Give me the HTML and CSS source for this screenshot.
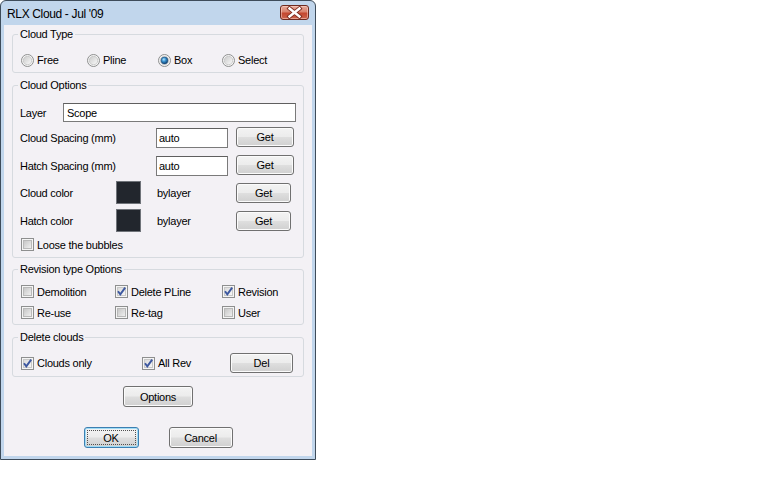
FILE: index.html
```html
<!DOCTYPE html>
<html>
<head>
<meta charset="utf-8">
<title>RLX Cloud - Jul '09</title>
<link rel="stylesheet" href="styles.css">
</head>
<body>
<svg class="defs" width="0" height="0" aria-hidden="true">
  <defs>
    <linearGradient id="g-cb-off" x1="0" y1="0" x2="1" y2="1">
      <stop offset="0" stop-color="#c4c4c4"/>
      <stop offset="1" stop-color="#f2f2f2"/>
    </linearGradient>
    <linearGradient id="g-cb-on" x1="0" y1="0" x2="1" y2="1">
      <stop offset="0" stop-color="#d9d9d9"/>
      <stop offset="1" stop-color="#f8f8f8"/>
    </linearGradient>
    <linearGradient id="g-rd" x1="0" y1="0" x2="1" y2="1">
      <stop offset="0" stop-color="#c9c9c9"/>
      <stop offset="1" stop-color="#fbfbfb"/>
    </linearGradient>
    <radialGradient id="g-dot" cx="0.4" cy="0.35" r="0.65">
      <stop offset="0" stop-color="#b5e6ff"/>
      <stop offset="0.45" stop-color="#3a92cf"/>
      <stop offset="1" stop-color="#0f3e6e"/>
    </radialGradient>
    <symbol id="cb-off" viewBox="0 0 13 13">
      <rect x="0.5" y="0.5" width="12" height="12" fill="#f5f5f5" stroke="#8e8f8f"/>
      <rect x="2.5" y="2.5" width="8" height="8" fill="url(#g-cb-off)" stroke="#b9b9b9"/>
    </symbol>
    <symbol id="cb-on" viewBox="0 0 13 13">
      <rect x="0.5" y="0.5" width="12" height="12" fill="#f5f5f5" stroke="#8e8f8f"/>
      <rect x="2.5" y="2.5" width="8" height="8" fill="url(#g-cb-on)" stroke="#c8c8c8"/>
      <path d="M3 6.2 L5.3 9.4 L10.2 2.6" fill="none" stroke="#3d58a0" stroke-width="1.9"/>
    </symbol>
    <symbol id="rd-off" viewBox="0 0 13 13">
      <circle cx="6.5" cy="6.5" r="6" fill="#f4f4f4" stroke="#8e8f8f"/>
      <circle cx="6.5" cy="6.5" r="4.2" fill="url(#g-rd)" stroke="#c4c4c4" stroke-width="0.8"/>
    </symbol>
    <symbol id="rd-on" viewBox="0 0 13 13">
      <circle cx="6.5" cy="6.5" r="6" fill="#f4f4f4" stroke="#8e8f8f"/>
      <circle cx="6.5" cy="6.5" r="4.2" fill="url(#g-rd)" stroke="#c4c4c4" stroke-width="0.8"/>
      <circle cx="6.5" cy="6.5" r="3.4" fill="url(#g-dot)" stroke="#1b4d7c" stroke-width="0.6"/>
    </symbol>
  </defs>
</svg>

<div class="window">
  <div class="titlebar">
    <span class="title">RLX Cloud - Jul '09</span>
    <span class="close">
      <svg width="27" height="13" viewBox="0 0 27 13">
        <path d="M8.5 2.5 L18.5 10.5 M18.5 2.5 L8.5 10.5" stroke="#7d2d20" stroke-width="4.2" stroke-linecap="square"/>
        <path d="M8.5 2.5 L18.5 10.5 M18.5 2.5 L8.5 10.5" stroke="#ffffff" stroke-width="2.4" stroke-linecap="square"/>
      </svg>
    </span>
  </div>

  <div class="content">
    <fieldset class="group g-type">
      <legend>Cloud Type</legend>
      <div class="radios">
        <span class="opt"><svg class="ico"><use href="#rd-off"/></svg>Free</span>
        <span class="opt"><svg class="ico"><use href="#rd-off"/></svg>Pline</span>
        <span class="opt"><svg class="ico"><use href="#rd-on"/></svg>Box</span>
        <span class="opt"><svg class="ico"><use href="#rd-off"/></svg>Select</span>
      </div>
    </fieldset>

    <fieldset class="group g-opts">
      <legend>Cloud Options</legend>
      <div class="row r-layer">
        <span class="lbl w-layer">Layer</span>
        <span class="field f-layer">Scope</span>
      </div>
      <div class="row r-sp r-sp1">
        <span class="lbl w-sp">Cloud Spacing (mm)</span>
        <span class="field f-sp">auto</span>
        <button class="btn b-get">Get</button>
      </div>
      <div class="row r-sp r-sp2">
        <span class="lbl w-sp">Hatch Spacing (mm)</span>
        <span class="field f-sp">auto</span>
        <button class="btn b-get">Get</button>
      </div>
      <div class="row r-col r-c1">
        <span class="lbl w-col">Cloud color</span>
        <span class="swatch"></span>
        <span class="bylayer">bylayer</span>
        <button class="btn b-get2">Get</button>
      </div>
      <div class="row r-col r-c2">
        <span class="lbl w-col">Hatch color</span>
        <span class="swatch"></span>
        <span class="bylayer">bylayer</span>
        <button class="btn b-get2">Get</button>
      </div>
      <div class="row r-loose">
        <span class="opt"><svg class="ico"><use href="#cb-off"/></svg>Loose the bubbles</span>
      </div>
    </fieldset>

    <fieldset class="group g-rev">
      <legend>Revision type Options</legend>
      <div class="grid3">
        <span class="opt"><svg class="ico"><use href="#cb-off"/></svg>Demolition</span>
        <span class="opt"><svg class="ico"><use href="#cb-on"/></svg>Delete PLine</span>
        <span class="opt"><svg class="ico"><use href="#cb-on"/></svg>Revision</span>
        <span class="opt"><svg class="ico"><use href="#cb-off"/></svg>Re-use</span>
        <span class="opt"><svg class="ico"><use href="#cb-off"/></svg>Re-tag</span>
        <span class="opt"><svg class="ico"><use href="#cb-off"/></svg>User</span>
      </div>
    </fieldset>

    <fieldset class="group g-del">
      <legend>Delete clouds</legend>
      <div class="row r-del">
        <span class="opt o-clouds"><svg class="ico"><use href="#cb-on"/></svg>Clouds only</span>
        <span class="opt o-allrev"><svg class="ico"><use href="#cb-on"/></svg>All Rev</span>
        <button class="btn b-del">Del</button>
      </div>
    </fieldset>

    <div class="center-row r-options">
      <button class="btn b-options">Options</button>
    </div>

    <div class="center-row r-actions">
      <button class="btn b-ok">OK</button>
      <button class="btn b-cancel">Cancel</button>
    </div>
  </div>
</div>
</body>
</html>
```

FILE: styles.css
```css
* {
  box-sizing: border-box;
}

html,
body {
  margin: 0;
  background: #ffffff;
}

body {
  font-family: "Liberation Sans", Arial, sans-serif;
  font-size: 11px;
  letter-spacing: -0.25px;
  color: #000000;
}

.defs {
  position: absolute;
  width: 0;
  height: 0;
  overflow: hidden;
}

.window {
  width: 316px;
  height: 460px;
  border: 1px solid #3e4c5a;
  border-radius: 6px 6px 0 0;
  background: #c1d6ec;
  padding: 0 3px 3px;
  display: flex;
  flex-direction: column;
}

.titlebar {
  height: 24px;
  flex: none;
  display: flex;
  align-items: center;
  justify-content: space-between;
  padding: 0 3px;
}

.title {
  font-size: 12px;
  letter-spacing: -0.35px;
  color: #000000;
  margin-top: 1px;
}

.close {
  width: 29px;
  height: 15px;
  margin-top: -1px;
  border: 1px solid #6e2a1f;
  border-radius: 3px;
  background: linear-gradient(#e6aa9b 0%, #d9826d 45%, #c4472f 55%, #cd654e 100%);
  box-shadow: inset 0 0 0 1px rgba(255, 220, 210, 0.5);
  display: flex;
  align-items: center;
  justify-content: center;
}

.close svg {
  display: block;
}

.content {
  flex: 1;
  background: #f3f1f5;
  padding: 0 8px;
  display: flex;
  flex-direction: column;
}

.group {
  margin: 0;
  padding: 0;
  border: 1px solid #d6dadf;
  border-radius: 3px;
  min-width: 0;
}

.group legend {
  margin-left: 5px;
  padding: 0 2px;
  line-height: 13px;
}

.opt {
  display: flex;
  align-items: center;
  gap: 3px;
  white-space: nowrap;
}

.ico {
  width: 13px;
  height: 13px;
  display: block;
  flex: none;
}

/* Cloud Type */
.g-type {
  margin-top: 3px;
  padding-bottom: 5px;
}

.radios {
  margin-top: 12px;
  height: 14px;
  padding-left: 8px;
  display: grid;
  grid-template-columns: 66px 71px 64px auto;
  align-items: center;
}

/* Cloud Options */
.g-opts {
  margin-top: 6px;
  padding-bottom: 6px;
}

.row {
  display: flex;
  align-items: center;
  padding-left: 7px;
}

.lbl {
  flex: none;
  white-space: nowrap;
}

.w-layer {
  width: 43px;
}

.w-sp {
  width: 136px;
}

.w-col {
  width: 96px;
}

.field {
  background: #ffffff;
  border: 1px solid #7a7a7a;
  border-top-color: #5f5f5f;
  display: flex;
  align-items: center;
  flex: none;
}

.r-layer {
  margin-top: 11px;
  height: 19px;
}

.f-layer {
  width: 233px;
  height: 19px;
  padding-left: 3px;
}

.r-sp {
  height: 21px;
  align-items: flex-start;
}

.r-sp .lbl {
  align-self: center;
}

.r-sp1 {
  margin-top: 5px;
}

.r-sp2 {
  margin-top: 7px;
}

.f-sp {
  width: 72px;
  height: 20px;
  margin-top: 1px;
  padding-left: 2px;
}

.btn {
  font-family: inherit;
  font-size: 11px;
  letter-spacing: inherit;
  color: #000000;
  padding: 0;
  margin: 0;
  height: 20px;
  border: 1px solid #707070;
  border-radius: 3px;
  background: linear-gradient(#f3f3f3 0%, #ececec 48%, #dedede 52%, #d0d0d0 100%);
  box-shadow: inset 0 0 0 1px #fbfbfb;
  display: flex;
  align-items: center;
  justify-content: center;
  flex: none;
}

.b-get {
  width: 58px;
  margin-left: 8px;
}

.r-col {
  height: 23px;
}

.r-c1 {
  margin-top: 5px;
}

.r-c2 {
  margin-top: 5px;
}

.swatch {
  width: 25px;
  height: 23px;
  background: #22262d;
  border: 1px solid #6f7379;
  flex: none;
}

.bylayer {
  margin-left: 16px;
  width: 79px;
  flex: none;
}

.b-get2 {
  width: 55px;
}

.r-loose {
  margin-top: 6px;
  height: 13px;
  padding-left: 8px;
}

/* Revision type Options */
.g-rev {
  margin-top: 5px;
  padding-bottom: 5px;
}

.grid3 {
  margin-top: 9px;
  padding-left: 8px;
  display: grid;
  grid-template-columns: 94px 107px auto;
  grid-auto-rows: 13px;
  row-gap: 8px;
}

/* Delete clouds */
.g-del {
  margin-top: 6px;
  padding-bottom: 3px;
}

.r-del {
  margin-top: 9px;
  height: 20px;
  padding-left: 8px;
}

.o-clouds {
  width: 121px;
}

.o-allrev {
  width: 88px;
}

.b-del {
  width: 63px;
}

/* bottom buttons */
.center-row {
  display: flex;
  justify-content: center;
  gap: 30px;
}

.r-options {
  margin-top: 9px;
}

.b-options {
  width: 70px;
  height: 21px;
}

.r-actions {
  margin-top: 20px;
}

.b-ok {
  width: 55px;
  height: 21px;
  border-color: #3c7fb1;
  box-shadow: inset 0 0 0 1px #9fdcf6;
  outline: 1px dotted #505050;
  outline-offset: -4px;
}

.b-cancel {
  width: 64px;
  height: 21px;
}
```
